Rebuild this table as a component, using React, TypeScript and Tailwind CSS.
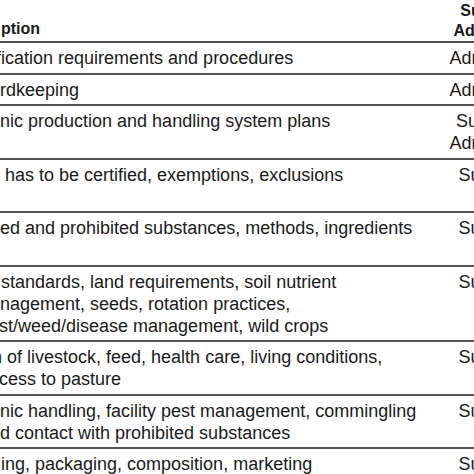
const rows: { left: { text: string; shift?: string }[]; right: string[] }[] = [
  { left: [{ text: "fication requirements and procedures", shift: "-ml-[4px]" }], right: ["Administrative"] },
  { left: [{ text: "rdkeeping" }], right: ["Administrative"] },
  { left: [{ text: "nic production and handling system plans" }], right: ["Supervisory/", "Administrative"] },
  { left: [{ text: "o has to be certified, exemptions, exclusions", shift: "-ml-[10px]" }], right: ["Supervisory", "NOP"] },
  { left: [{ text: "ed and prohibited substances, methods, ingredients" }], right: ["Supervisory", "NOP"] },
  {
    left: [
      { text: "standards, land requirements, soil nutrient", shift: "ml-[1px]" },
      { text: "nagement, seeds, rotation practices," },
      { text: "st/weed/disease management, wild crops", shift: "-ml-[1px]" },
    ],
    right: ["Supervisory"],
  },
  {
    left: [
      { text: "n of livestock, feed, health care, living conditions,", shift: "-ml-[8px]" },
      { text: "cess to pasture", shift: "-ml-[1px]" },
    ],
    right: ["Supervisory"],
  },
  {
    left: [
      { text: "nic handling, facility pest management, commingling" },
      { text: "d contact with prohibited substances" },
    ],
    right: ["Supervisory"],
  },
  { left: [{ text: "ing, packaging, composition, marketing", shift: "ml-[1px]" }], right: ["Supervisory"] },
];

export default function App() {
  return (
    <div className="w-[474px] h-[474px] overflow-hidden bg-white text-[#1a1a1a] font-['Liberation_Sans',Arial,sans-serif]">
      <table className="w-[566px] border-collapse table-fixed">
        <colgroup>
          <col className="w-[446px]" />
          <col className="w-[120px]" />
        </colgroup>
        <thead>
          <tr className="border-b-2 border-[#505050]">
            <th className="h-[41px] p-0 pb-[2px] align-bottom text-left text-[16px] leading-[20px] font-bold">
              <span className="block pl-[1px]">ption</span>
            </th>
            <th className="h-[41px] p-0 pt-[1px] align-top text-center text-[16px] leading-[20px] font-bold">
              <div>Supervising</div>
              <div>Administrator</div>
            </th>
          </tr>
        </thead>
        <tbody>
          {rows.map((r, i) => (
            <tr key={i} className="border-b-2 border-[#555]">
              <td className="p-0 pt-[4px] pb-[3.5px] align-top text-[18px] leading-[22px] whitespace-nowrap">
                {r.left.map((l, j) => (
                  <div key={j} className={l.shift}>
                    {l.text}
                  </div>
                ))}
              </td>
              <td className="p-0 pt-[4px] pb-[3.5px] align-top text-center text-[18px] leading-[22px] whitespace-nowrap">
                {r.right.map((t, j) => (
                  <div key={j}>{t}</div>
                ))}
              </td>
            </tr>
          ))}
        </tbody>
      </table>
    </div>
  );
}
